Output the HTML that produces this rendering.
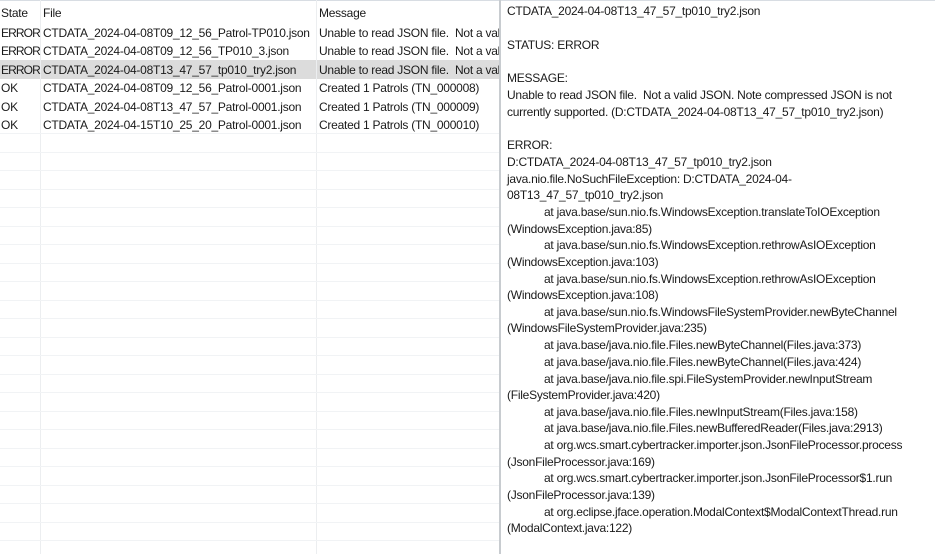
<!DOCTYPE html>
<html><head><style>
body{margin:0;width:935px;height:554px;background:#fff;position:relative;overflow:hidden;font-family:"Liberation Sans",sans-serif;font-size:12px;color:#1a1a1a;letter-spacing:-0.25px}
.a{position:absolute;white-space:nowrap;line-height:16px}
.e{letter-spacing:-0.9px}
.h{position:absolute;left:0;width:499px;height:1px;background:#f1f3f5}
.v{position:absolute;top:0;width:1px;height:554px;background:#eceef0}
</style></head><body>
<div style="position:absolute;left:0;top:0;width:935px;height:1px;background:#d8dde3"></div>
<div style="position:absolute;left:0;top:60px;width:499px;height:19px;background:#dcdcdc"></div>
<div class="v" style="left:40px"></div>
<div class="v" style="left:316px"></div>
<div class="h" style="top:133px"></div><div class="h" style="top:152px"></div>
<div class="h" style="top:170px"></div><div class="h" style="top:189px"></div>
<div class="h" style="top:207px"></div><div class="h" style="top:226px"></div>
<div class="h" style="top:244px"></div><div class="h" style="top:263px"></div>
<div class="h" style="top:281px"></div><div class="h" style="top:300px"></div>
<div class="h" style="top:318px"></div><div class="h" style="top:337px"></div>
<div class="h" style="top:355px"></div><div class="h" style="top:374px"></div>
<div class="h" style="top:392px"></div><div class="h" style="top:411px"></div>
<div class="h" style="top:429px"></div><div class="h" style="top:448px"></div>
<div class="h" style="top:466px"></div><div class="h" style="top:485px"></div>
<div class="h" style="top:503px"></div><div class="h" style="top:522px"></div>
<div class="h" style="top:540px"></div>
<div style="position:absolute;left:499px;top:0;width:2px;height:554px;background:#c8ccd0"></div>

<div class="a" style="left:1px;top:5px">State</div>
<div class="a" style="left:43px;top:5px">File</div>
<div class="a" style="left:319px;top:5px">Message</div>

<div class="a e" style="left:1px;top:25px">ERROR</div><div class="a" style="left:43px;top:25px">CTDATA_2024-04-08T09_12_56_Patrol-TP010.json</div><div class="a" style="left:319px;top:25px;width:180px;overflow:hidden">Unable to read JSON file.&nbsp; Not a valid</div>
<div class="a e" style="left:1px;top:43px">ERROR</div><div class="a" style="left:43px;top:43px">CTDATA_2024-04-08T09_12_56_TP010_3.json</div><div class="a" style="left:319px;top:43px;width:180px;overflow:hidden">Unable to read JSON file.&nbsp; Not a valid</div>
<div class="a e" style="left:1px;top:62px">ERROR</div><div class="a" style="left:43px;top:62px">CTDATA_2024-04-08T13_47_57_tp010_try2.json</div><div class="a" style="left:319px;top:62px;width:180px;overflow:hidden">Unable to read JSON file.&nbsp; Not a valid</div>
<div class="a" style="left:1px;top:80px">OK</div><div class="a" style="left:43px;top:80px">CTDATA_2024-04-08T09_12_56_Patrol-0001.json</div><div class="a" style="left:319px;top:80px">Created 1 Patrols (TN_000008)</div>
<div class="a" style="left:1px;top:99px">OK</div><div class="a" style="left:43px;top:99px">CTDATA_2024-04-08T13_47_57_Patrol-0001.json</div><div class="a" style="left:319px;top:99px">Created 1 Patrols (TN_000009)</div>
<div class="a" style="left:1px;top:117px">OK</div><div class="a" style="left:43px;top:117px">CTDATA_2024-04-15T10_25_20_Patrol-0001.json</div><div class="a" style="left:319px;top:117px">Created 1 Patrols (TN_000010)</div>

<div class="a" style="left:507px;top:3px">CTDATA_2024-04-08T13_47_57_tp010_try2.json</div>
<div class="a" style="left:507px;top:37px">STATUS: ERROR</div>
<div class="a" style="left:507px;top:70px">MESSAGE:</div>
<div class="a" style="left:507px;top:87px">Unable to read JSON file.&nbsp; Not a valid JSON. Note compressed JSON is not</div>
<div class="a" style="left:507px;top:104px">currently supported. (D:CTDATA_2024-04-08T13_47_57_tp010_try2.json)</div>
<div class="a" style="left:507px;top:137px">ERROR:</div>
<div class="a" style="left:507px;top:154px">D:CTDATA_2024-04-08T13_47_57_tp010_try2.json</div>
<div class="a" style="left:507px;top:171px">java.nio.file.NoSuchFileException: D:CTDATA_2024-04-</div>
<div class="a" style="left:507px;top:187px">08T13_47_57_tp010_try2.json</div>
<div class="a" style="left:544px;top:204px">at java.base/sun.nio.fs.WindowsException.translateToIOException</div>
<div class="a" style="left:507px;top:221px">(WindowsException.java:85)</div>
<div class="a" style="left:544px;top:237px">at java.base/sun.nio.fs.WindowsException.rethrowAsIOException</div>
<div class="a" style="left:507px;top:254px">(WindowsException.java:103)</div>
<div class="a" style="left:544px;top:271px">at java.base/sun.nio.fs.WindowsException.rethrowAsIOException</div>
<div class="a" style="left:507px;top:287px">(WindowsException.java:108)</div>
<div class="a" style="left:544px;top:304px">at java.base/sun.nio.fs.WindowsFileSystemProvider.newByteChannel</div>
<div class="a" style="left:507px;top:320px">(WindowsFileSystemProvider.java:235)</div>
<div class="a" style="left:544px;top:337px">at java.base/java.nio.file.Files.newByteChannel(Files.java:373)</div>
<div class="a" style="left:544px;top:354px">at java.base/java.nio.file.Files.newByteChannel(Files.java:424)</div>
<div class="a" style="left:544px;top:371px">at java.base/java.nio.file.spi.FileSystemProvider.newInputStream</div>
<div class="a" style="left:507px;top:387px">(FileSystemProvider.java:420)</div>
<div class="a" style="left:544px;top:404px">at java.base/java.nio.file.Files.newInputStream(Files.java:158)</div>
<div class="a" style="left:544px;top:420px">at java.base/java.nio.file.Files.newBufferedReader(Files.java:2913)</div>
<div class="a" style="left:544px;top:437px">at org.wcs.smart.cybertracker.importer.json.JsonFileProcessor.process</div>
<div class="a" style="left:507px;top:454px">(JsonFileProcessor.java:169)</div>
<div class="a" style="left:544px;top:470px">at org.wcs.smart.cybertracker.importer.json.JsonFileProcessor$1.run</div>
<div class="a" style="left:507px;top:487px">(JsonFileProcessor.java:139)</div>
<div class="a" style="left:544px;top:504px">at org.eclipse.jface.operation.ModalContext$ModalContextThread.run</div>
<div class="a" style="left:507px;top:520px">(ModalContext.java:122)</div>
</body></html>
